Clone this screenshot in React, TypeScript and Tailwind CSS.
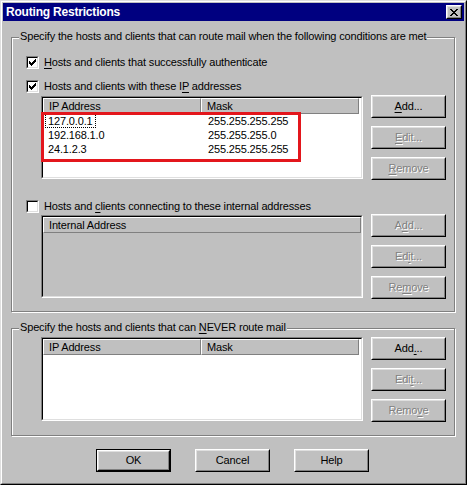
import React from "react"

type Node = React.ReactNode

function Key({ children }: { children: Node }) {
  return <span className="underline decoration-1 underline-offset-[2px]">{children}</span>
}

function Bevel({ children, className = "" }: { children: Node; className?: string }) {
  return (
    <div className={`flex border border-t-white border-l-white border-r-black border-b-black ${className}`}>
      <div className="flex flex-1 items-center justify-center border border-t-[#dfdfdf] border-l-[#dfdfdf] border-r-[#808080] border-b-[#808080] bg-[#c0c0c0]">
        {children}
      </div>
    </div>
  )
}

function Button({ children, disabled = false, isDefault = false }: { children: Node; disabled?: boolean; isDefault?: boolean }) {
  const text = disabled ? "text-[#808080] [text-shadow:1px_1px_0_#fff]" : "text-black"
  return (
    <div className={`flex w-[75px] h-[23px] shrink-0 ${isDefault ? "border border-black" : ""}`}>
      <Bevel className="flex-1">
        <span className={`leading-[13px] ${text}`}>{children}</span>
      </Bevel>
    </div>
  )
}

function Checkbox({ checked }: { checked: boolean }) {
  return (
    <div className="w-[13px] h-[13px] shrink-0 border border-t-[#808080] border-l-[#808080] border-r-white border-b-white">
      <div className="flex w-full h-full items-center justify-center border border-t-black border-l-black border-r-[#dfdfdf] border-b-[#dfdfdf] bg-white">
        {checked && (
          <svg width="7" height="7" viewBox="0 0 7 7" shapeRendering="crispEdges">
            <path
              fill="#000"
              d="M6 0h1v1h-1z M5 1h2v1h-2z M0 2h1v1h-1z M4 2h3v1h-3z M0 3h2v1h-2z M3 3h3v1h-3z M0 4h5v1h-5z M1 5h3v1h-3z M2 6h1v1h-1z"
            />
          </svg>
        )}
      </div>
    </div>
  )
}

function CheckRow({ checked, label, className = "" }: { checked: boolean; label: Node; className?: string }) {
  return (
    <div className={`flex items-center gap-[5px] h-[13px] ${className}`}>
      <Checkbox checked={checked} />
      <span className="leading-[13px] whitespace-nowrap">{label}</span>
    </div>
  )
}

function GroupBox({ label, className = "", children }: { label: Node; className?: string; children: Node }) {
  return (
    <div className={`relative border border-[#808080] shadow-[inset_1px_1px_0_#fff,1px_1px_0_#fff] ${className}`}>
      <div className="absolute left-[7px] -top-[8px] px-[1px] bg-[#c0c0c0] leading-[13px] whitespace-nowrap">{label}</div>
      {children}
    </div>
  )
}

interface Column {
  title: string
  widthClass: string
}

interface Row {
  ip: string
  mask: string
  focused?: boolean
}

function ListView({
  columns,
  rows = [],
  disabled = false,
  highlight = false,
  heightClass = "h-[83px]",
  className = ""
}: {
  columns: Column[]
  rows?: Row[]
  disabled?: boolean
  highlight?: boolean
  heightClass?: string
  className?: string
}) {
  return (
    <div className={`relative w-[322px] ${heightClass} shrink-0 border border-t-[#808080] border-l-[#808080] border-r-white border-b-white ${className}`}>
      <div className={`flex flex-col w-full h-full border border-t-black border-l-black border-r-[#dfdfdf] border-b-[#dfdfdf] ${disabled ? "bg-[#c0c0c0]" : "bg-white"}`}>
        <div className="flex h-[16px] shrink-0">
          {columns.map((col) => (
            <div
              key={col.title}
              className={`${col.widthClass} h-full flex items-center pl-[5px] bg-[#c0c0c0] border border-t-white border-l-white border-r-[#808080] border-b-[#808080] leading-[13px] whitespace-nowrap`}
            >
              {col.title}
            </div>
          ))}
        </div>
        {rows.map((row) => (
          <div key={row.ip} className="flex h-[14px] items-center leading-[12px]">
            <div className="w-[158px] pl-[2px]">
              <span className={`inline-block px-[2px] border ${row.focused ? "border-dotted border-black" : "border-transparent"}`}>
                {row.ip}
              </span>
            </div>
            <div className="pl-[7px]">{row.mask}</div>
          </div>
        ))}
      </div>
      {highlight && (
        <div className="absolute -left-[1px] top-[15px] w-[260px] h-[50px] border-[3px] border-[#e3161c]" />
      )}
    </div>
  )
}

function ButtonColumn({ labels, disabled }: { labels: Node[]; disabled: boolean[] }) {
  return (
    <div className="flex flex-col gap-[8px]">
      {labels.map((label, i) => (
        <Button key={i} disabled={disabled[i]}>
          {label}
        </Button>
      ))}
    </div>
  )
}

const ipColumns: Column[] = [
  { title: "IP Address", widthClass: "w-[158px]" },
  { title: "Mask", widthClass: "w-[158px]" }
]

const internalColumns: Column[] = [{ title: "Internal Address", widthClass: "w-[318px]" }]

const allowedRows: Row[] = [
  { ip: "127.0.0.1", mask: "255.255.255.255", focused: true },
  { ip: "192.168.1.0", mask: "255.255.255.0" },
  { ip: "24.1.2.3", mask: "255.255.255.255" }
]

export default function App() {
  return (
    <div className="w-[467px] h-[485px] bg-[#c0c0c0] border border-t-[#dfdfdf] border-l-[#dfdfdf] border-r-black border-b-black font-['Liberation_Sans',Arial,sans-serif] text-[11px] tracking-[-0.15px] text-black select-none">
      <div className="w-full h-full border border-t-white border-l-white border-r-[#808080] border-b-[#808080] p-[1px] flex flex-col">
        <div className="flex items-center justify-between h-[18px] bg-[#000080] pl-[3px] pr-[2px]">
          <span className="text-white font-bold text-[12px] leading-[14px] tracking-[-0.2px]">Routing Restrictions</span>
          <Bevel className="w-[16px] h-[14px]">
            <svg width="8" height="7" viewBox="0 0 8 7" shapeRendering="crispEdges">
              <path
                fill="#000"
                d="M0 0h2v1h-2z M6 0h2v1h-2z M1 1h2v1h-2z M5 1h2v1h-2z M2 2h4v1h-4z M3 3h2v1h-2z M2 4h4v1h-4z M1 5h2v1h-2z M5 5h2v1h-2z M0 6h2v1h-2z M6 6h2v1h-2z"
              />
            </svg>
          </Bevel>
        </div>

        <GroupBox
          className="ml-[8px] mt-[16px] w-[444px] h-[275px] pl-[14px] pt-[18px]"
          label="Specify the hosts and clients that can route mail when the following conditions are met"
        >
          <CheckRow checked label={<><Key>H</Key>osts and clients that successfully authenticate</>} />
          <CheckRow checked className="mt-[11px]" label={<>Hosts and clients with these I<Key>P</Key> addresses</>} />
          <div className="flex ml-[15px] mt-[2px] gap-[8px]">
            <ListView className="mt-[1px]" columns={ipColumns} rows={allowedRows} highlight />
            <ButtonColumn
              labels={[<><Key>A</Key>dd...</>, <><Key>E</Key>dit...</>, <><Key>R</Key>emove</>]}
              disabled={[false, true, true]}
            />
          </div>

          <CheckRow
            checked={false}
            className="mt-[20px]"
            label={<>Hosts and <Key>c</Key>lients connecting to these internal addresses</>}
          />
          <div className="flex ml-[15px] mt-[1px] gap-[8px]">
            <ListView className="mt-[1px]" columns={internalColumns} disabled />
            <ButtonColumn
              labels={[<>A<Key>d</Key>d...</>, <>Ed<Key>i</Key>t...</>, <>Re<Key>m</Key>ove</>]}
              disabled={[true, true, true]}
            />
          </div>
        </GroupBox>

        <GroupBox
          className="ml-[8px] mt-[16px] w-[444px] h-[108px] pl-[29px] pt-[8px]"
          label={<>Specify the hosts and clients that can <Key>N</Key>EVER route mail</>}
        >
          <div className="flex gap-[8px]">
            <ListView columns={ipColumns} heightClass="h-[84px]" />
            <ButtonColumn
              labels={[<>Add<Key>.</Key>..</>, <>Edi<Key>t</Key>...</>, <>Remo<Key>v</Key>e</>]}
              disabled={[false, true, true]}
            />
          </div>
        </GroupBox>

        <div className="flex pl-[93px] mt-[13px] gap-[24px]">
          <Button isDefault>OK</Button>
          <Button>Cancel</Button>
          <Button>Help</Button>
        </div>
      </div>
    </div>
  )
}
